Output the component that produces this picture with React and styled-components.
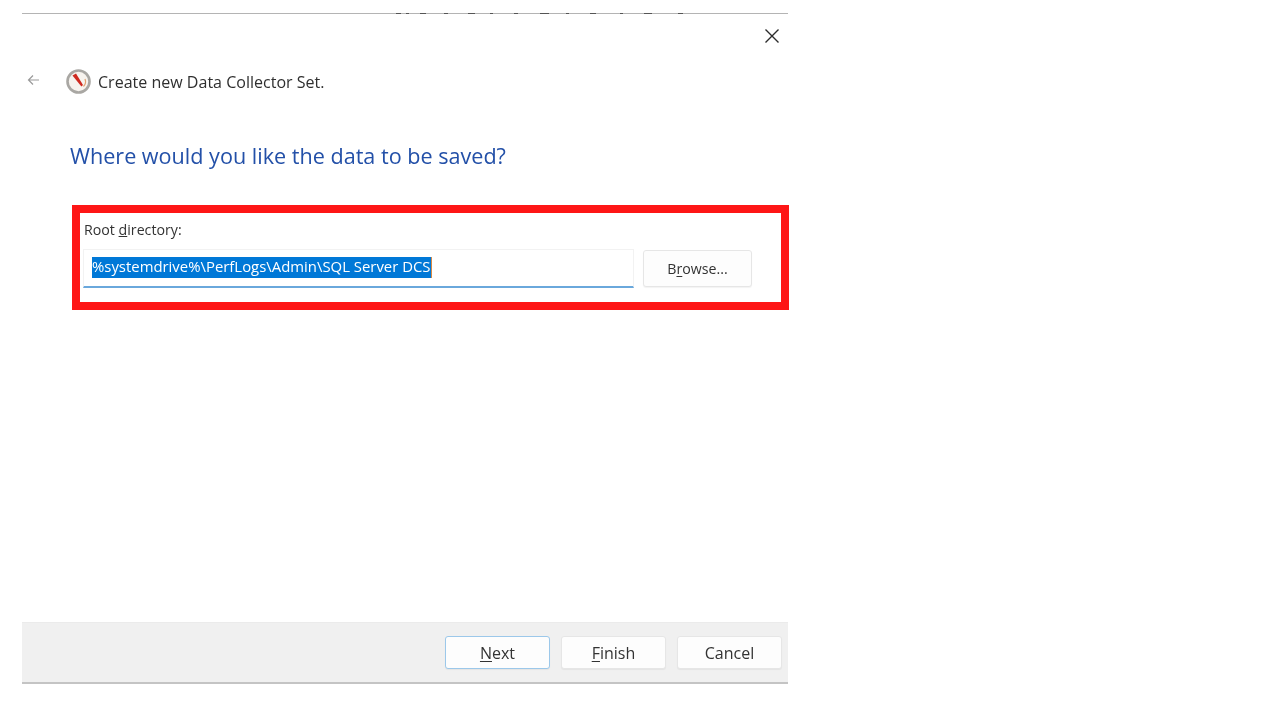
import React from 'react';
import styled, { createGlobalStyle } from 'styled-components';

const GlobalStyle = createGlobalStyle`
  html, body {
    margin: 0;
    padding: 0;
    background: #fff;
    font-family: "Open Sans", "Noto Sans", "Liberation Sans", sans-serif;
  }
`;

const Dialog = styled.div`
  position: relative;
  box-sizing: border-box;
  width: 766px;
  height: 671px;
  margin: 13px 0 0 22px;
  border-top: 1px solid #b4b4b4;
  display: flex;
  flex-direction: column;
  filter: blur(0.3px);
`;

const TopSpecks = styled.svg`
  position: absolute;
  left: 372px;
  top: -1px;
  display: block;
`;

const CloseRow = styled.div`
  height: 44px;
  padding-right: 8px;
  display: flex;
  justify-content: flex-end;
  align-items: flex-end;
`;

const CloseButton = styled.svg`
  display: block;
  margin-bottom: 14px;
`;

const HeaderRow = styled.div`
  display: flex;
  align-items: center;
  height: 26px;
  margin-top: 10px;
  padding-left: 5px;
`;

const BackArrow = styled.svg`
  display: block;
  margin: -2px 26px 0 0;
`;

const AppIcon = styled.svg`
  display: block;
  margin-right: 7px;
`;

const HeaderTitle = styled.span`
  font-size: 16.05px;
  color: #2f2f2f;
  padding-top: 1px;
`;

const Heading = styled.h1`
  margin: 45px 0 0 48px;
  height: 34px;
  line-height: 34px;
  font-size: 21.6px;
  font-weight: 400;
  color: #2350a8;
`;

const Highlight = styled.section`
  box-sizing: border-box;
  width: 717px;
  height: 105px;
  margin: 32px 0 0 50px;
  border: 8px solid #fe1616;
  padding: 7px 0 0 3px;
`;

const FieldLabel = styled.label`
  display: block;
  height: 20px;
  line-height: 20px;
  font-size: 14.2px;
  color: #333;
  padding-left: 1px;
`;

const FieldRow = styled.div`
  display: flex;
  align-items: flex-start;
  margin-top: 9px;
`;

const PathInput = styled.div`
  box-sizing: border-box;
  width: 551px;
  height: 39px;
  padding: 5px 0 0 8px;
  border: 1px solid #f2f2f2;
  border-bottom: 2px solid #6aa8dc;
`;

const Selected = styled.span`
  display: inline-block;
  height: 21px;
  line-height: 19px;
  font-size: 14.9px;
  color: #fff;
  background: #0078d7;
  border-right: 1px solid #d98a45;
  white-space: nowrap;
`;

const Button = styled.button`
  box-sizing: border-box;
  width: ${(props) => props.$width || 105}px;
  height: ${(props) => props.$height || 33}px;
  padding: 0;
  font-family: inherit;
  font-size: 16px;
  color: #333;
  background: #fdfdfd;
  border: 1px solid ${(props) => (props.$primary ? '#9cc8ea' : '#e6e6e6')};
  border-radius: 3px;
  box-shadow: 0 1px 1px rgba(0, 0, 0, 0.05);

  u {
    text-underline-offset: 2px;
  }
`;

const BrowseButton = styled(Button)`
  margin: 1px 0 0 9px;
  font-size: 14.2px;
`;

const Footer = styled.footer`
  box-sizing: border-box;
  height: 62px;
  margin-top: auto;
  padding: 13px 6px 0 0;
  background: #f0f0f0;
  border-top: 1px solid #ebebeb;
  border-bottom: 2px solid #c4c4c4;
  display: flex;
  justify-content: flex-end;
  gap: 11px;
`;

export default function App() {
  return (
    <>
      <GlobalStyle />
      <Dialog>
        <TopSpecks width="300" height="2" viewBox="0 0 300 2">
          <path
            d="M2 .5h5M12 .5h3M26 .5h6M50 .5h4M74 .5h7M96 .5h3M120 .5h4M146 .5h9M172 .5h3M196 .5h6M226 .5h3M250 .5h8M284 .5h5"
            stroke="#555"
            strokeWidth="1"
          />
        </TopSpecks>
        <CloseRow>
          <CloseButton width="16" height="16" viewBox="0 0 16 16">
            <path d="M1.5 1.5l13 13M14.5 1.5l-13 13" stroke="#2b2b2b" strokeWidth="1.4" fill="none" />
          </CloseButton>
        </CloseRow>
        <HeaderRow>
          <BackArrow width="13" height="12" viewBox="0 0 13 12">
            <path d="M12 6H1.5M6 1.5L1.5 6 6 10.5" stroke="#9a9a9a" strokeWidth="1.2" fill="none" />
          </BackArrow>
          <AppIcon width="25" height="25" viewBox="0 0 25 25">
            <circle cx="12.5" cy="12.5" r="11" fill="#f7f3ee" stroke="#a9a7a3" strokeWidth="2.6" />
            <path d="M19 10a7 7 0 0 1-1.5 7.5" stroke="#e0a070" strokeWidth="1.2" fill="none" />
            <path d="M6.5 6.5l3.5-2 7 11.5-1.6 1.4z" fill="#cf2a20" />
          </AppIcon>
          <HeaderTitle>Create new Data Collector Set.</HeaderTitle>
        </HeaderRow>
        <Heading>Where would you like the data to be saved?</Heading>
        <Highlight>
          <FieldLabel>Root <u>d</u>irectory:</FieldLabel>
          <FieldRow>
            <PathInput>
              <Selected>%systemdrive%\PerfLogs\Admin\SQL Server DCS</Selected>
            </PathInput>
            <BrowseButton $width={109} $height={37}>B<u>r</u>owse...</BrowseButton>
          </FieldRow>
        </Highlight>
        <Footer>
          <Button $primary><u>N</u>ext</Button>
          <Button><u>F</u>inish</Button>
          <Button>Cancel</Button>
        </Footer>
      </Dialog>
    </>
  );
}
